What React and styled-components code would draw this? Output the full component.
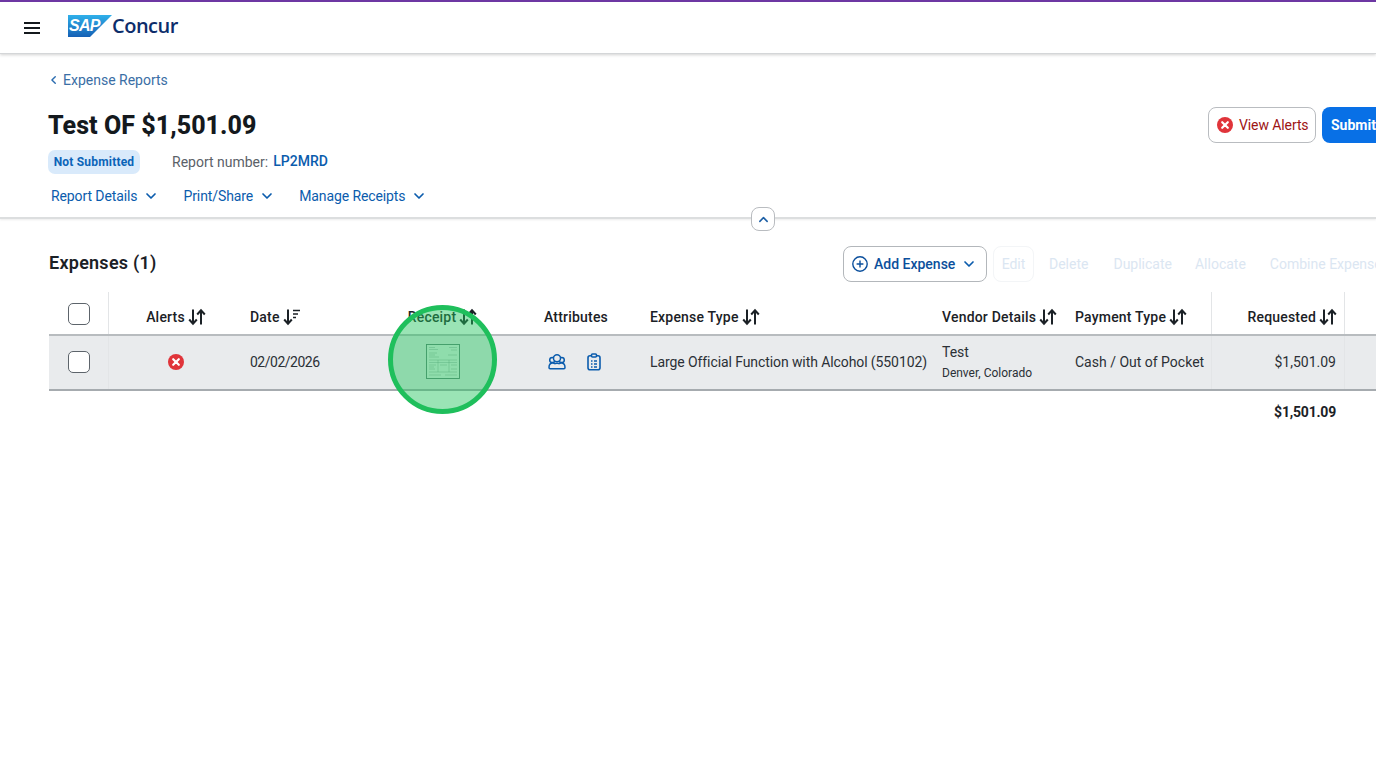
import React from "react";
import styled, { createGlobalStyle } from "styled-components";

const Global = createGlobalStyle`
  html, body { margin: 0; padding: 0; background: #fff; height: 100%; overflow: hidden; }
  body { font-family: Roboto, "Liberation Sans", sans-serif; color: #1b2126; }
  * { box-sizing: border-box; }
`;

const Page = styled.div`
  position: relative;
  width: 1376px;
  height: 769px;
  overflow: hidden;
  background: #fff;
`;
const TopBar = styled.header`
  height: 54px;
  border-top: 2px solid #6d37a3;
  border-bottom: 1px solid #d5d7d9;
  box-shadow: 0 1px 3px rgba(0,0,0,.18);
  display: flex;
  align-items: center;
  padding-left: 24px;
`;
const Burger = styled.svg`
  width: 16px;
  height: 12px;
  margin-right: 28px;
  margin-top: 1px;
`;
const Logo = styled.div`
  display: flex;
  align-items: center;
  margin-top: -3px;
`;
const SapMark = styled.div`
  position: relative;
  width: 44px;
  height: 22px;
`;
const SapMarkShape = styled.svg`
  width: 44px;
  height: 22px;
  display: block;
`;
const SapText = styled.span`
  position: absolute;
  left: 1px;
  top: 3px;
  font: italic 700 16px/16px "Liberation Sans", sans-serif;
  letter-spacing: -.7px;
  color: #fff;
`;
const Concur = styled.span`
  font: 600 20px/22px "Open Sans", Roboto, sans-serif;
  color: #0d2d6b;
  letter-spacing: -.5px;
`;
const Head = styled.section`
  height: 165px;
  border-bottom: 2px solid #dcdedf;
  box-shadow: 0 1px 2px rgba(0,0,0,.08);
  padding: 17px 0 0 49px;
  position: relative;
`;
const Back = styled.a`
  display: flex;
  align-items: center;
  gap: 4px;
  height: 18px;
  font-size: 14px;
  color: #3a6ea5;
`;
const TitleGrid = styled.div`
  display: grid;
  grid-template-columns: 1159px 200px;
  margin-top: 18px;
  height: 36px;
  align-items: center;
`;
const Title = styled.h1`
  margin: 2px 0 0 -1px;
  font: 800 25px/30px Roboto, sans-serif;
  letter-spacing: .05px;
  color: #14191d;
`;
const Actions = styled.div`
  display: flex;
  gap: 6px;
`;
const Alerts = styled.button`
  display: flex;
  align-items: center;
  gap: 6px;
  width: 108px;
  height: 36px;
  flex: none;
  padding: 0 0 0 8px;
  background: #fff;
  border: 1px solid #b9bcc0;
  border-radius: 8px;
  color: #9d1414;
  font: 400 14px Roboto, sans-serif;
  letter-spacing: -.1px;
`;
const Submit = styled.button`
  height: 36px;
  width: 120px;
  flex: none;
  border: 0;
  border-radius: 8px;
  background: #0870e6;
  color: #fff;
  font: 700 14px Roboto, sans-serif;
  text-align: left;
  white-space: nowrap;
  padding-left: 9px;
`;
const Meta = styled.div`
  display: flex;
  align-items: center;
  height: 24px;
  margin-top: 7px;
`;
const Badge = styled.span`
  width: 92px;
  height: 24px;
  border-radius: 7px;
  background: #d9eafb;
  color: #0b64b8;
  font: 700 12px/24px Roboto, sans-serif;
  letter-spacing: .2px;
  text-align: center;
  margin-left: -1px;
`;
const MetaLabel = styled.span`
  margin-left: 32px;
  font-size: 14px;
  color: #5b6168;
`;
const MetaValue = styled.span`
  margin-left: 5px;
  font-size: 14px;
  font-weight: 500;
  color: #0b5cad;
  position: relative;
  top: -1px;
`;
const Menu = styled.nav`
  display: flex;
  margin-top: 12px;
  padding-left: 2px;
  height: 20px;
  align-items: center;
`;
const MenuItem = styled.a`
  display: flex;
  align-items: center;
  gap: 8px;
  margin-right: 26px;
  font-size: 14px;
  letter-spacing: -.1px;
  color: #0b5cad;
`;
const Collapse = styled.button`
  position: absolute;
  left: 751px;
  top: 153px;
  width: 24px;
  height: 24px;
  padding: 0;
  background: #fff;
  border: 1px solid #b9bcc0;
  border-radius: 8px;
  display: flex;
  align-items: center;
  justify-content: center;
`;
const ToolRow = styled.div`
  display: flex;
  align-items: center;
  height: 36px;
  margin-top: 27px;
  padding-left: 49px;
  white-space: nowrap;
`;
const SectionTitle = styled.h2`
  margin: 0;
  flex: none;
  width: 794px;
  padding-bottom: 2px;
  font: 600 18px/24px Roboto, sans-serif;
  letter-spacing: .25px;
  color: #1b2126;
`;
const AddButton = styled.button`
  flex: none;
  width: 144px;
  height: 36px;
  display: flex;
  align-items: center;
  gap: 6px;
  padding: 0 0 0 8px;
  background: #fff;
  border: 1px solid #b3b7bb;
  border-radius: 8px;
  color: #0b4f9c;
  font: 500 14px Roboto, sans-serif;
`;
const AddChevron = styled.span`
  display: flex;
  margin-left: 2px;
`;
const GhostBox = styled.span`
  flex: none;
  margin-left: 6px;
  width: 41px;
  height: 36px;
  border: 1px solid #f3f5f7;
  border-radius: 8px;
  text-align: center;
  font-size: 14px;
  line-height: 34px;
  color: #dbe6f2;
`;
const Ghost = styled.span`
  flex: none;
  margin-left: ${p => p.$gap}px;
  font-size: 14px;
  color: #dbe6f2;
`;
const Table = styled.div`
  margin: 10px 0 0 49px;
  width: 1327px;
`;
const Row = styled.div`
  display: grid;
  grid-template-columns: 60px 128px 117px 177px 106px 292px 133px 150px 133px 1fr;
  height: ${p => p.$h}px;
  align-items: stretch;
  background: ${p => p.$bg || "transparent"};
  border-bottom: ${p => p.$line || "0"};
`;
const Cell = styled.div`
  display: flex;
  align-items: center;
  justify-content: ${p => p.$justify || "flex-start"};
  padding: ${p => p.$pad || "0 0 0 13px"};
  border-right: ${p => (p.$rule ? "1px solid #e3e5e7" : "0")};
  font-size: 14px;
  color: #2b3036;
  white-space: nowrap;
  min-width: 0;
`;
const HeadCell = styled(Cell)`
  font-weight: 500;
  letter-spacing: .2px;
  color: #1b2126;
  gap: 3px;
  padding-top: 7px;
`;
const BodyCell = styled(Cell)`
  padding-bottom: 2px;
`;
const Check = styled.span`
  width: 22px;
  height: 22px;
  background: #fff;
  border: 1px solid #5d646b;
  border-radius: 5px;
`;
const DateText = styled.span`
  letter-spacing: -.5px;
`;
const ExpenseText = styled.span`
  letter-spacing: -.09px;
`;
const Vendor = styled.div`
  display: flex;
  flex-direction: column;
  gap: 6px;
  margin-top: 1px;
`;
const VendorCity = styled.span`
  font-size: 12px;
  line-height: 15px;
`;
const VendorName = styled.span`
  line-height: 16px;
`;
const Icons = styled.div`
  display: flex;
  gap: 19px;
  margin-left: 4px;
  align-items: center;
`;
const Thumb = styled.svg`
  width: 34px;
  height: 35px;
  display: block;
  margin-top: -3px;
`;
const Total = styled.div`
  margin-top: 13px;
  width: 1287px;
  text-align: right;
  font-size: 14px;
  font-weight: 700;
  letter-spacing: -.2px;
  line-height: 17px;
  color: #1b2126;
`;
const Highlight = styled.div`
  position: absolute;
  left: 388px;
  top: 305px;
  width: 109px;
  height: 109px;
  border-radius: 50%;
  border: 5px solid #1fbf5c;
  background: rgba(34, 197, 94, .46);
  pointer-events: none;
`;

const Sort = () => (
  <svg width="18" height="18" viewBox="0 0 18 18" fill="none" stroke="#1b2126" strokeWidth="2">
    <path d="M5 1.500v14M1.200 11.500 5 15.700l3.800-4.200M13 16.500v-14M9.200 6.500 13 2.300l3.800 4.200" />
  </svg>
);
const SortDate = () => (
  <svg width="18" height="18" viewBox="0 0 18 18" fill="none" stroke="#1b2126" strokeWidth="2">
    <path d="M5 1.500v14M1.200 11.500 5 15.700l3.800-4.200" />
    <path d="M10 2.500h7M10 6h5M10 9.500h3" strokeWidth="1.500" />
  </svg>
);
const Chevron = ({ size = 12, color = "#0b5cad", up, left }) => (
  <svg width={size} height={size} viewBox="0 0 12 12" fill="none" stroke={color} strokeWidth="1.700" strokeLinecap="round" strokeLinejoin="round">
    <path d={left ? "M7.500 2 3.500 6l4 4" : up ? "M2 8l4-4 4 4" : "M2 4l4 4 4-4"} />
  </svg>
);
const ErrorIcon = ({ size = 16 }) => (
  <svg width={size} height={size} viewBox="0 0 16 16">
    <circle cx="8" cy="8" r="8" fill="#e0343a" />
    <path d="M5.200 5.200l5.600 5.600M10.800 5.200l-5.600 5.600" stroke="#fff" strokeWidth="2.200" strokeLinecap="round" />
  </svg>
);

export default function App() {
  return (
    <Page>
      <Global />
      <TopBar>
        <Burger viewBox="0 0 16 12" fill="none" stroke="#14191d" strokeWidth="2">
          <path d="M0 1h16M0 6h16M0 11h16" />
        </Burger>
        <Logo>
          <SapMark>
            <SapMarkShape viewBox="0 0 44 22">
              <defs>
                <linearGradient id="sap" x1="0" y1="0" x2="0" y2="1">
                  <stop offset="0" stopColor="#2fb0ea" />
                  <stop offset="1" stopColor="#1560b5" />
                </linearGradient>
              </defs>
              <path d="M0 0h44L22 22H0z" fill="url(#sap)" />
            </SapMarkShape>
            <SapText>SAP</SapText>
          </SapMark>
          <Concur>Concur</Concur>
        </Logo>
      </TopBar>
      <Head>
        <Back><Chevron left color="#2b6cb0" size={10} />Expense Reports</Back>
        <TitleGrid>
          <Title>Test OF $1,501.09</Title>
          <Actions>
            <Alerts><ErrorIcon />View Alerts</Alerts>
            <Submit>Submit Report</Submit>
          </Actions>
        </TitleGrid>
        <Meta>
          <Badge>Not Submitted</Badge>
          <MetaLabel>Report number:</MetaLabel>
          <MetaValue>LP2MRD</MetaValue>
        </Meta>
        <Menu>
          <MenuItem>Report Details<Chevron /></MenuItem>
          <MenuItem>Print/Share<Chevron /></MenuItem>
          <MenuItem>Manage Receipts<Chevron /></MenuItem>
        </Menu>
        <Collapse><Chevron up size={11} color="#1d5fa5" /></Collapse>
      </Head>
      <ToolRow>
        <SectionTitle>Expenses (1)</SectionTitle>
        <AddButton>
          <svg width="16" height="16" viewBox="0 0 16 16" fill="none" stroke="#0b4f9c" strokeWidth="1.400">
            <circle cx="8" cy="8" r="7.200" />
            <path d="M8 4.600v6.800M4.600 8h6.800" />
          </svg>
          Add Expense
          <AddChevron><Chevron /></AddChevron>
        </AddButton>
        <GhostBox>Edit</GhostBox>
        <Ghost $gap={15}>Delete</Ghost>
        <Ghost $gap={25}>Duplicate</Ghost>
        <Ghost $gap={23}>Allocate</Ghost>
        <Ghost $gap={24}>Combine Expenses</Ghost>
      </ToolRow>
      <Table>
        <Row $h={44} $line="2px solid #b8bcbf">
          <Cell $justify="center" $pad="2px 0 0 0" $rule><Check /></Cell>
          <HeadCell $justify="center" $pad="0 0 0 6px">Alerts <Sort /></HeadCell>
          <HeadCell>Date <SortDate /></HeadCell>
          <HeadCell $justify="center" $pad="0">Receipt <Sort /></HeadCell>
          <HeadCell>Attributes</HeadCell>
          <HeadCell>Expense Type <Sort /></HeadCell>
          <HeadCell>Vendor Details <Sort /></HeadCell>
          <HeadCell $rule>Payment Type <Sort /></HeadCell>
          <HeadCell $justify="flex-end" $pad="0 7px 0 0" $rule>Requested <Sort /></HeadCell>
          <Cell />
        </Row>
        <Row $h={55} $bg="#e9ebed" $line="2px solid #a6abaf">
          <BodyCell $justify="center" $pad="0" $rule><Check /></BodyCell>
          <BodyCell $justify="center" $pad="0 0 0 6px"><ErrorIcon /></BodyCell>
          <BodyCell><DateText>02/02/2026</DateText></BodyCell>
          <Cell $justify="center" $pad="0">
            <Thumb viewBox="0 0 34 35" fill="none" stroke="#6f8a82" strokeWidth=".35">
              <rect x=".5" y=".5" width="33" height="34" fill="#eaf2ee" stroke="#55776c" strokeWidth=".9" />
              <path d="M3 3.500h6M3 5.500h9M23 3.500h8M25 6h6M3 9h8M3 11h6M3 13h10M22 11h9M3 16h28M3 18.500h28M12 16v12M23 16v12M3 21h7M3 23h5M3 25h6M14 21h7M25 21h6M25 25h6M3 28h28M3 31h12M19 31h12" />
            </Thumb>
          </Cell>
          <BodyCell>
            <Icons>
              <svg width="18" height="18" viewBox="0 0 18 18" fill="none" stroke="#0b5cad" strokeWidth="1.500">
                <circle cx="4.300" cy="7" r="2.600" />
                <circle cx="13.700" cy="7" r="2.600" />
                <circle cx="9" cy="5.300" r="3.500" fill="#e9ebed" />
                <path d="M1 14.500c0-2.700 1.600-4.500 3.800-4.500 1 0 1.700.3 2.200.7.600-.3 1.300-.5 2-.5s1.400.2 2 .5c.5-.4 1.200-.7 2.200-.7 2.200 0 3.800 1.800 3.800 4.500 0 .7-.4 1.200-1.100 1.200H2.100c-.7 0-1.100-.5-1.100-1.200z" fill="#e9ebed" />
              </svg>
              <svg width="18" height="18" viewBox="0 0 18 18" fill="none" stroke="#0b5cad" strokeWidth="1.600">
                <rect x="3" y="2.800" width="12" height="14" rx="2" />
                <rect x="6.500" y="1" width="5" height="3" rx="1" fill="#e9ebed" />
                <path d="M6 8h1.500M9 8h3M6 11h1.500M9 11h3M6 14h1.500M9 14h3" />
              </svg>
            </Icons>
          </BodyCell>
          <BodyCell><ExpenseText>Large Official Function with Alcohol (550102)</ExpenseText></BodyCell>
          <BodyCell>
            <Vendor>
              <VendorName>Test</VendorName>
              <VendorCity>Denver, Colorado</VendorCity>
            </Vendor>
          </BodyCell>
          <BodyCell $rule>Cash / Out of Pocket</BodyCell>
          <BodyCell $justify="flex-end" $pad="0 8px 0 0" $rule>$1,501.09</BodyCell>
          <Cell />
        </Row>
        <Total>$1,501.09</Total>
      </Table>
      <Highlight />
    </Page>
  );
}
